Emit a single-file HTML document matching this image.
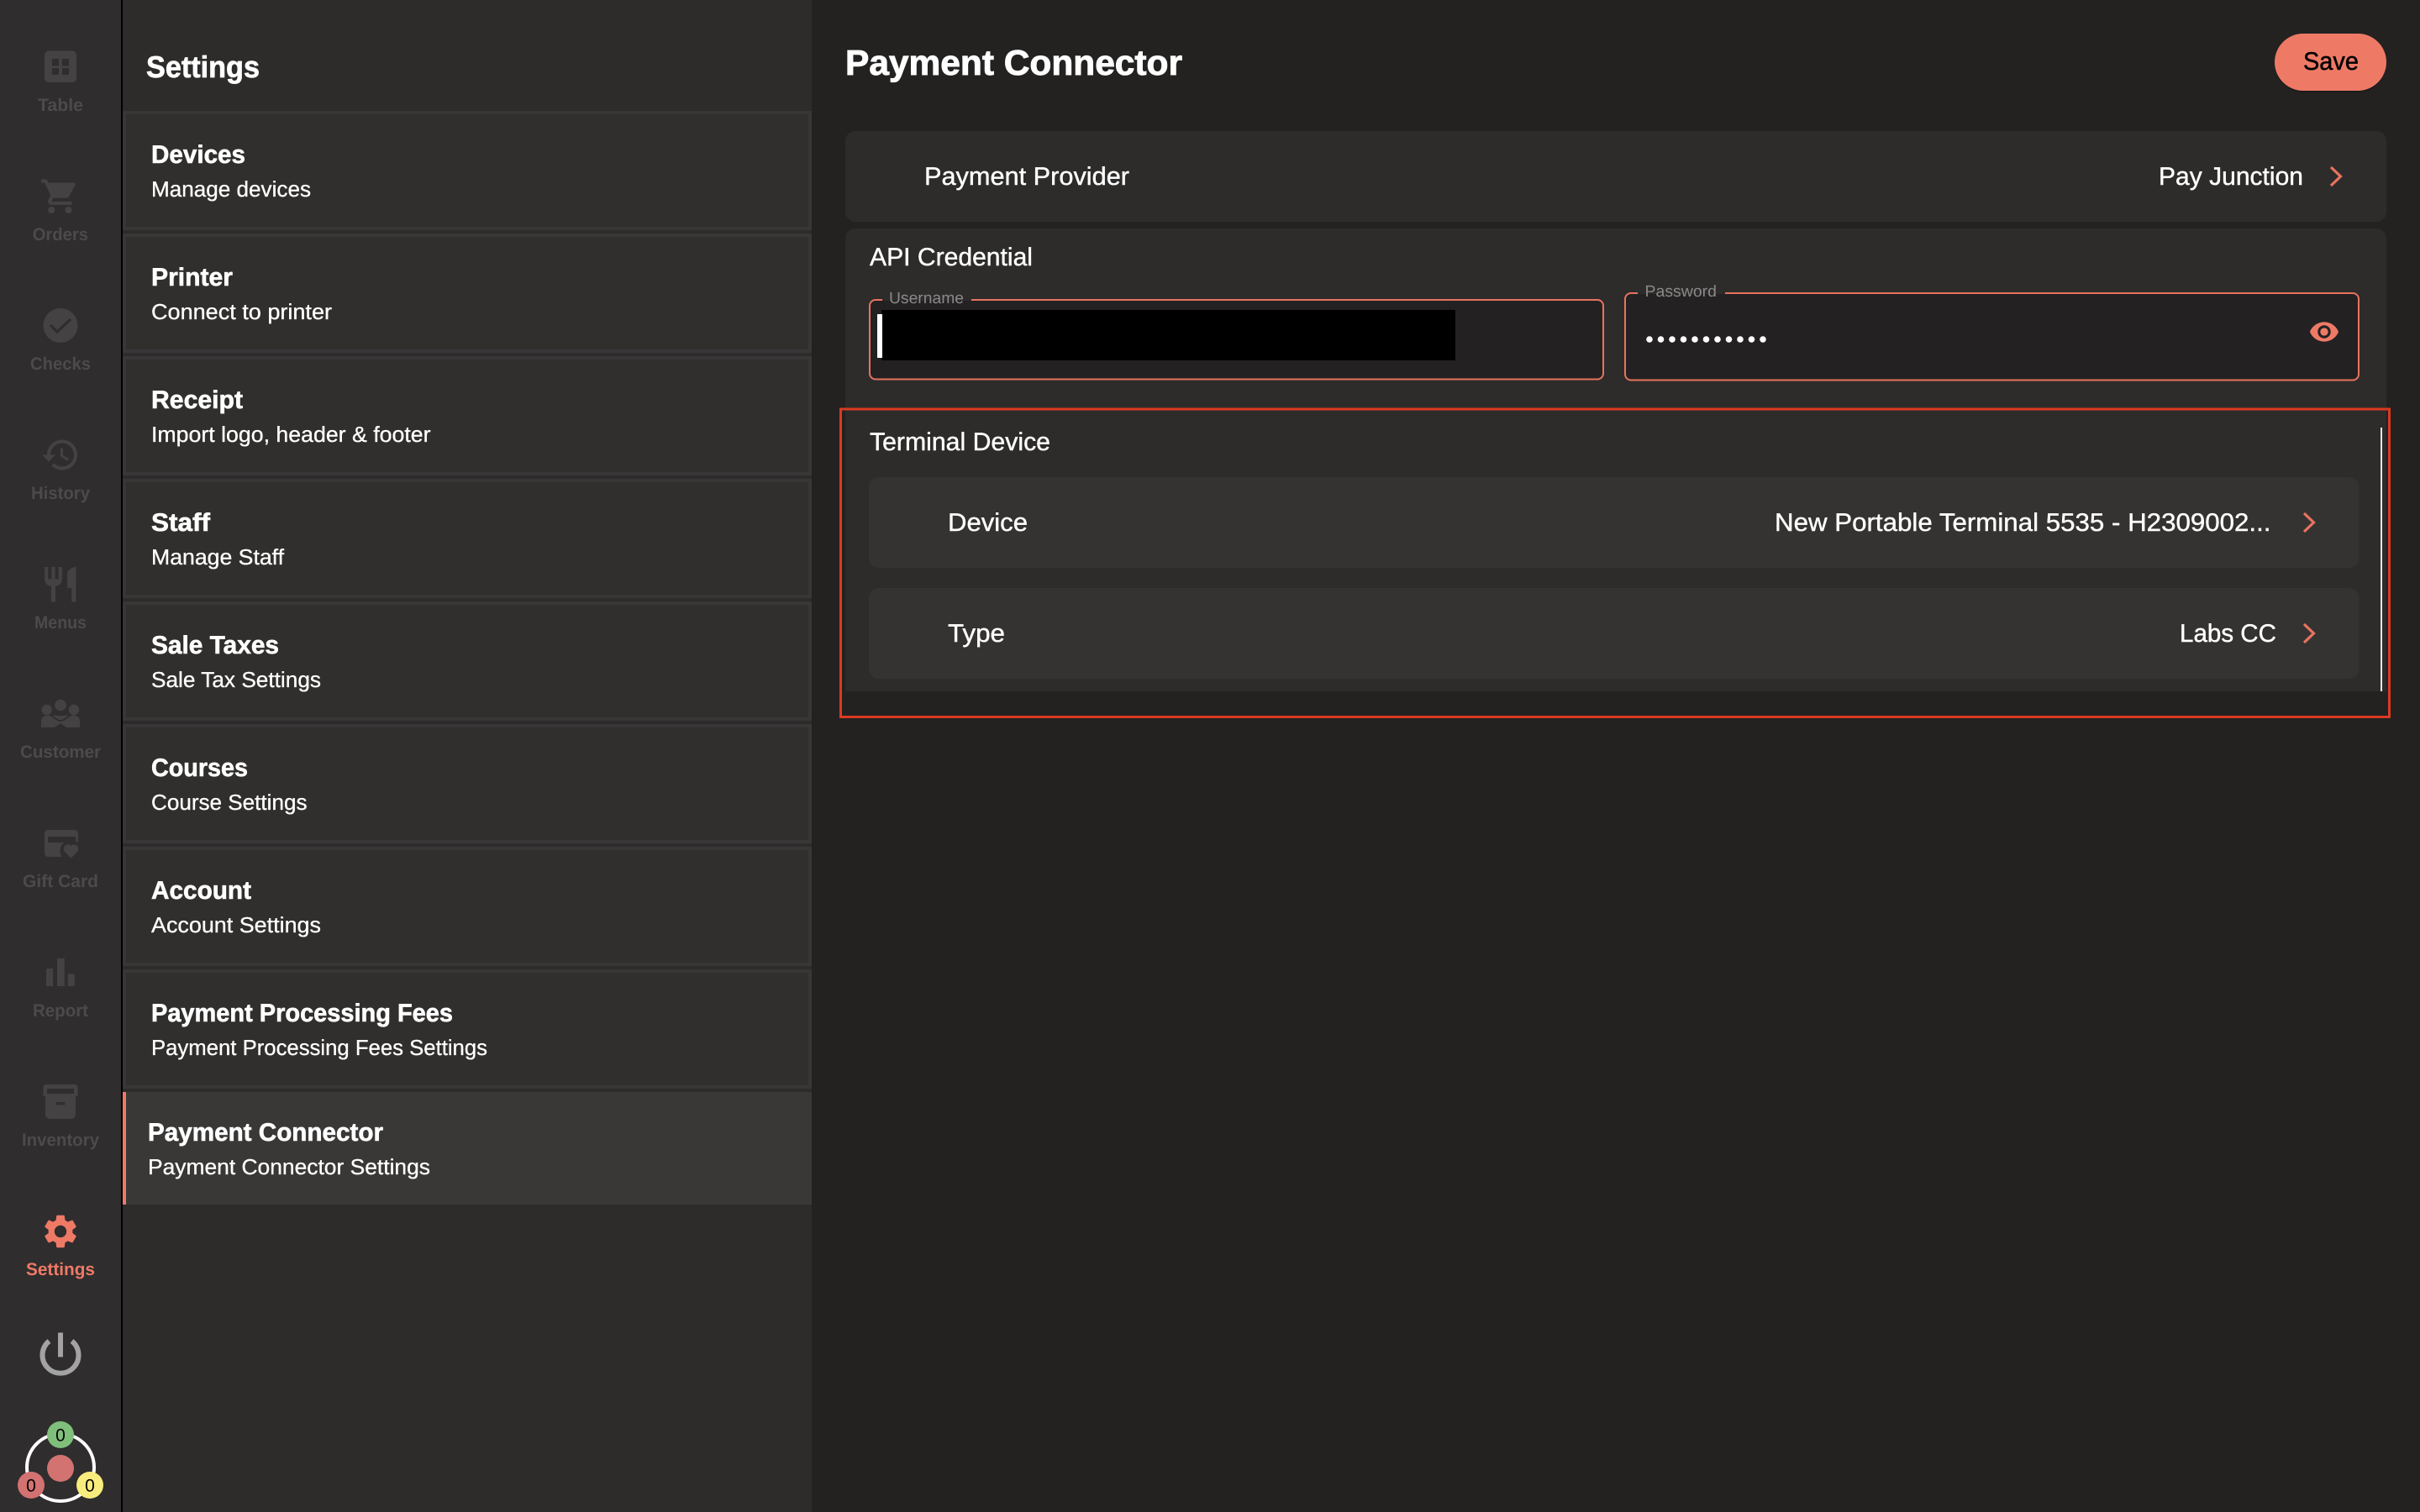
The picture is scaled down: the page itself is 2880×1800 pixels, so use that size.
<!DOCTYPE html>
<html lang="en">
<head>
<meta charset="utf-8">
<title>Payment Connector</title>
<style>
html,body{margin:0;padding:0;width:2880px;height:1800px;overflow:hidden;background:#232221}
svg{display:block;position:absolute;left:0;top:0}
text{font-family:"Liberation Sans",sans-serif;text-rendering:geometricPrecision}
.nav{font-size:21px;font-weight:700;fill:#4c4a4b}
.h{font-size:30px;font-weight:700;fill:#fff;stroke:#fff;stroke-width:.6}
.s{font-size:26px;fill:#fff;stroke:#fff;stroke-width:.3}
.m{font-size:30px;fill:#fff;stroke:#fff;stroke-width:.4}
.ic{fill:#444243}
.b{font-size:21px;fill:#000;text-anchor:middle}
.chev{fill:none;stroke:#e8735f;stroke-width:3.2}
</style>
</head>
<body>
<svg width="2880" height="1800" viewBox="0 0 2880 1800" xmlns="http://www.w3.org/2000/svg">
<!-- backgrounds -->
<rect x="0" y="0" width="2880" height="1800" fill="#232221"/>
<rect x="0" y="0" width="144" height="1800" fill="#2f2d2e"/>
<rect x="144" y="0" width="2" height="1800" fill="#000"/>
<rect x="146" y="0" width="820" height="1800" fill="#2d2c2b"/>

<!-- sidebar: table -->
<path class="ic" fill-rule="evenodd" d="M58 60.5h28a5 5 0 0 1 5 5V93a5 5 0 0 1-5 5H58a5 5 0 0 1-5-5V65.5a5 5 0 0 1 5-5zM62 70v8.5h8V70zM74 70v8.5h8V70zM62 81v8h8v-8zM74 81v8h8v-8z"/>
<text class="nav" x="45" y="132" textLength="54" lengthAdjust="spacingAndGlyphs">Table</text>
<!-- orders -->
<path class="ic" transform="translate(47 209.4) scale(2.03)" d="M7 18c-1.1 0-1.99.9-1.99 2S5.9 22 7 22s2-.9 2-2-.9-2-2-2zM1 2v2h2l3.6 7.59-1.35 2.45c-.16.28-.25.61-.25.96 0 1.1.9 2 2 2h12v-2H7.42c-.14 0-.25-.11-.25-.25l.03-.12.9-1.63h7.45c.75 0 1.41-.41 1.75-1.03l3.58-6.49c.08-.14.12-.31.12-.48 0-.55-.45-1-1-1H5.21l-.94-2H1zm16 16c-1.1 0-1.99.9-1.99 2s.89 2 1.99 2 2-.9 2-2-.9-2-2-2z"/>
<text class="nav" x="38.700" y="286" textLength="66.300" lengthAdjust="spacingAndGlyphs">Orders</text>
<!-- checks -->
<circle class="ic" cx="72" cy="387.500" r="20.500"/>
<path d="M60 387l8 8 16-15" fill="none" stroke="#2f2d2e" stroke-width="3.200"/>
<text class="nav" x="36" y="440" textLength="72" lengthAdjust="spacingAndGlyphs">Checks</text>
<!-- history -->
<path class="ic" transform="translate(48 517.5) scale(2)" d="M13 3c-4.97 0-9 4.03-9 9H1l3.89 3.89.07.14L9 12H6c0-3.87 3.13-7 7-7s7 3.13 7 7-3.13 7-7 7c-1.93 0-3.68-.79-4.94-2.06l-1.42 1.42C8.27 19.99 10.51 21 13 21c4.97 0 9-4.03 9-9s-4.03-9-9-9zm-1 5v5l4.28 2.54.72-1.21-3.5-2.08V8H12z"/>
<text class="nav" x="37" y="594" textLength="70" lengthAdjust="spacingAndGlyphs">History</text>
<!-- menus -->
<path class="ic" transform="translate(46.800 670.8) scale(2.08)" d="M11 9H9V2H7v7H5V2H3v7c0 2.12 1.66 3.84 3.75 3.97V22h2.500v-9.030C11.340 12.840 13 11.120 13 9V2h-2v7zm5-3v8h2.500v8H21V2c-2.760 0-5 2.240-5 4z"/>
<text class="nav" x="41" y="748" textLength="62" lengthAdjust="spacingAndGlyphs">Menus</text>
<!-- customer -->
<circle class="ic" cx="72" cy="839.500" r="6.800"/>
<circle class="ic" cx="55.700" cy="845" r="6.200"/>
<circle class="ic" cx="88" cy="845" r="6.200"/>
<path class="ic" d="M49 866v-8c0-4 4-6.500 9-6.500 5 0 8 .5 14 .5s9-.5 14-.5c5 0 9 2.500 9 6.500v8H79l-7-5-7 5z"/>
<path d="M59 851.500c4 0 7.500 6.500 13 6.500s9-6.500 13-6.500" fill="none" stroke="#2f2d2e" stroke-width="1.800"/>
<text class="nav" x="24" y="902" textLength="96" lengthAdjust="spacingAndGlyphs">Customer</text>
<!-- gift card -->
<path class="ic" fill-rule="evenodd" d="M57 988h32a4 4 0 0 1 4 4v28H57a4 4 0 0 1-4-4v-24a4 4 0 0 1 4-4zM57 996v7h33v-7z"/>
<circle cx="84.500" cy="1013" r="13" fill="#2f2d2e"/>
<rect x="88" y="1003" width="8" height="20" fill="#2f2d2e"/>
<path class="ic" d="M84.500 1021.500l-7.300-7.300a5.100 5.100 0 0 1 7.300-7.300 5.100 5.100 0 0 1 7.300 7.300z"/>
<text class="nav" x="27" y="1056" textLength="90" lengthAdjust="spacingAndGlyphs">Gift Card</text>
<!-- report -->
<rect class="ic" x="55" y="1153" width="8" height="21"/>
<rect class="ic" x="68" y="1141" width="8.700" height="33"/>
<rect class="ic" x="80.700" y="1159.500" width="8" height="14.500"/>
<text class="nav" x="39" y="1210" textLength="66" lengthAdjust="spacingAndGlyphs">Report</text>
<!-- inventory -->
<path class="ic" fill-rule="evenodd" d="M55 1291h34a3.500 3.500 0 0 1 3.500 3.500v10.500H90v22a5 5 0 0 1-5 5H59a5 5 0 0 1-5-5v-22h-2.500v-10.500A3.500 3.500 0 0 1 55 1291zM56 1296v6h32v-6zM66.700 1312v3.200h10.600V1312z"/>
<text class="nav" x="26" y="1364" textLength="92" lengthAdjust="spacingAndGlyphs">Inventory</text>
<!-- settings -->
<path fill="#ee7a66" transform="translate(48 1442) scale(2)" d="M19.14 12.94c.04-.3.06-.61.06-.94 0-.32-.02-.64-.07-.94l2.03-1.58c.18-.14.23-.41.12-.61l-1.92-3.32c-.12-.22-.37-.29-.59-.22l-2.39.96c-.5-.38-1.03-.7-1.62-.94l-.36-2.54c-.04-.24-.24-.41-.48-.41h-3.84c-.24 0-.43.17-.47.41l-.36 2.54c-.59.24-1.13.57-1.62.94l-2.39-.96c-.22-.08-.47 0-.59.22L2.74 8.87c-.12.21-.08.47.12.61l2.03 1.58c-.05.3-.09.63-.09.94s.02.64.07.94l-2.03 1.58c-.18.14-.23.41-.12.61l1.92 3.32c.12.22.37.29.59.22l2.39-.96c.5.38 1.03.7 1.62.94l.36 2.54c.05.24.24.41.48.41h3.84c.24 0 .44-.17.47-.41l.36-2.54c.59-.24 1.13-.56 1.62-.94l2.39.96c.22.08.47 0 .59-.22l1.92-3.32c.12-.22.07-.47-.12-.61l-2.01-1.58zM12 15.6c-1.98 0-3.6-1.62-3.6-3.6s1.62-3.6 3.6-3.6 3.6 1.62 3.6 3.6-1.62 3.6-3.6 3.6z"/>
<text class="nav" style="fill:#ee7a66" x="31" y="1518" textLength="82" lengthAdjust="spacingAndGlyphs">Settings</text>
<!-- power -->
<path d="M58.500 1596.500A21.500 21.500 0 1 0 85.500 1596.500" fill="none" stroke="#a3a3a3" stroke-width="6"/>
<rect x="69" y="1586.500" width="6" height="29" fill="#a3a3a3"/>
<!-- status -->
<circle cx="72" cy="1747" r="40" fill="none" stroke="#fff" stroke-width="4"/>
<circle cx="72" cy="1748" r="16" fill="#d27271"/>
<circle cx="72" cy="1708" r="16" fill="#7fbf7b"/>
<circle cx="37" cy="1768" r="16" fill="#d27271"/>
<circle cx="107" cy="1768" r="16" fill="#f8ec7c"/>
<text class="b" x="72" y="1715.500">0</text>
<text class="b" x="37" y="1775.500">0</text>
<text class="b" x="107" y="1775.500">0</text>

<!-- settings panel -->
<text x="174" y="92" font-size="36" font-weight="700" fill="#fff" stroke="#fff" stroke-width=".7" textLength="135" lengthAdjust="spacingAndGlyphs">Settings</text>

<g fill="#302f2d" stroke="#383637" stroke-width="4">
<rect x="148" y="134" width="816" height="138"/>
<rect x="148" y="280" width="816" height="138"/>
<rect x="148" y="426" width="816" height="138"/>
<rect x="148" y="572" width="816" height="138"/>
<rect x="148" y="718" width="816" height="138"/>
<rect x="148" y="864" width="816" height="138"/>
<rect x="148" y="1010" width="816" height="138"/>
<rect x="148" y="1156" width="816" height="138"/>
</g>
<rect x="146" y="1300" width="820" height="134" fill="#393837"/>
<rect x="146" y="1300" width="4" height="134" fill="#ee7a66"/>

<text class="h" x="180" y="194" textLength="112" lengthAdjust="spacingAndGlyphs">Devices</text>
<text class="s" x="180" y="234" textLength="190" lengthAdjust="spacingAndGlyphs">Manage devices</text>
<text class="h" x="180" y="340" textLength="97" lengthAdjust="spacingAndGlyphs">Printer</text>
<text class="s" x="180" y="380" textLength="215" lengthAdjust="spacingAndGlyphs">Connect to printer</text>
<text class="h" x="180" y="486" textLength="109" lengthAdjust="spacingAndGlyphs">Receipt</text>
<text class="s" x="180" y="526" textLength="332.500" lengthAdjust="spacingAndGlyphs">Import logo, header &amp; footer</text>
<text class="h" x="180" y="632" textLength="70" lengthAdjust="spacingAndGlyphs">Staff</text>
<text class="s" x="180" y="672" textLength="158" lengthAdjust="spacingAndGlyphs">Manage Staff</text>
<text class="h" x="180" y="778" textLength="152" lengthAdjust="spacingAndGlyphs">Sale Taxes</text>
<text class="s" x="180" y="818" textLength="202" lengthAdjust="spacingAndGlyphs">Sale Tax Settings</text>
<text class="h" x="180" y="924" textLength="115" lengthAdjust="spacingAndGlyphs">Courses</text>
<text class="s" x="180" y="964" textLength="185.500" lengthAdjust="spacingAndGlyphs">Course Settings</text>
<text class="h" x="180" y="1070" textLength="119" lengthAdjust="spacingAndGlyphs">Account</text>
<text class="s" x="180" y="1110" textLength="202" lengthAdjust="spacingAndGlyphs">Account Settings</text>
<text class="h" x="180" y="1216" textLength="359" lengthAdjust="spacingAndGlyphs">Payment Processing Fees</text>
<text class="s" x="180" y="1256" textLength="400" lengthAdjust="spacingAndGlyphs">Payment Processing Fees Settings</text>
<text class="h" x="176" y="1358" textLength="280" lengthAdjust="spacingAndGlyphs">Payment Connector</text>
<text class="s" x="176" y="1398" textLength="336" lengthAdjust="spacingAndGlyphs">Payment Connector Settings</text>

<!-- main header -->
<text x="1006" y="89" font-size="42" font-weight="700" fill="#fff" stroke="#fff" stroke-width=".9" textLength="401" lengthAdjust="spacingAndGlyphs">Payment Connector</text>
<rect x="2707" y="42" width="133" height="68" rx="34" fill="#000" opacity=".18"/>
<rect x="2707" y="40" width="133" height="68" rx="34" fill="#ee7a66"/>
<text x="2741" y="83" font-size="30" fill="#000" stroke="#000" stroke-width=".5" textLength="66" lengthAdjust="spacingAndGlyphs">Save</text>

<!-- provider card -->
<rect x="1006" y="156" width="1834" height="108" rx="12" fill="#2d2c2b"/>
<text class="m" x="1100" y="220" textLength="244" lengthAdjust="spacingAndGlyphs">Payment Provider</text>
<text class="m" x="2569" y="220" textLength="172" lengthAdjust="spacingAndGlyphs">Pay Junction</text>
<path class="chev" d="M2774 199l11.500 11-11.500 11"/>

<!-- credential card -->
<rect x="1006" y="272" width="1834" height="551" rx="12" fill="#2d2c2b"/>
<rect x="1006" y="480" width="1834" height="343" fill="#2d2c2b"/>
<text class="m" x="1035" y="316" textLength="194" lengthAdjust="spacingAndGlyphs">API Credential</text>

<!-- username field -->
<rect x="1035" y="357" width="873" height="94.500" rx="7" fill="#232122" stroke="#e8735f" stroke-width="2"/>
<rect x="1050" y="355" width="106" height="3" fill="#2d2c2b"/>
<rect x="1050" y="358" width="106" height="2" fill="#232122"/>
<text x="1058" y="361" font-size="19" fill="#8a8888" textLength="89" lengthAdjust="spacingAndGlyphs">Username</text>
<rect x="1049" y="369" width="683" height="60" fill="#000"/>
<rect x="1044" y="374" width="6" height="52" fill="#fff"/>

<!-- password field -->
<rect x="1934" y="349" width="873" height="103.500" rx="7" fill="#232122" stroke="#e8735f" stroke-width="2"/>
<rect x="1949" y="347" width="104" height="3" fill="#2d2c2b"/>
<rect x="1949" y="350" width="104" height="2" fill="#232122"/>
<text x="1957.500" y="353" font-size="19" fill="#8a8888" textLength="85.500" lengthAdjust="spacingAndGlyphs">Password</text>
<g fill="#fff">
<circle cx="1963" cy="404" r="3.800"/><circle cx="1976.500" cy="404" r="3.800"/><circle cx="1990" cy="404" r="3.800"/><circle cx="2003.500" cy="404" r="3.800"/><circle cx="2017" cy="404" r="3.800"/><circle cx="2030.500" cy="404" r="3.800"/><circle cx="2044" cy="404" r="3.800"/><circle cx="2057.500" cy="404" r="3.800"/><circle cx="2071" cy="404" r="3.800"/><circle cx="2084.500" cy="404" r="3.800"/><circle cx="2098" cy="404" r="3.800"/>
</g>
<path fill="#ee7a66" transform="translate(2747.400 376.400) scale(1.55)" d="M12 4.500C7 4.500 2.730 7.610 1 12c1.730 4.390 6 7.500 11 7.500s9.270-3.110 11-7.500c-1.730-4.390-6-7.500-11-7.500zM12 17c-2.760 0-5-2.240-5-5s2.240-5 5-5 5 2.240 5 5-2.240 5-5 5zm0-8c-1.660 0-3 1.340-3 3s1.340 3 3 3 3-1.340 3-3-1.340-3-3-3z"/>

<!-- terminal device -->
<text class="m" x="1035" y="536" textLength="215" lengthAdjust="spacingAndGlyphs">Terminal Device</text>
<rect x="1034" y="568" width="1773.500" height="108" rx="12" fill="#343332"/>
<text class="m" x="1128" y="632" textLength="95" lengthAdjust="spacingAndGlyphs">Device</text>
<text class="m" x="2112" y="632" textLength="590.500" lengthAdjust="spacingAndGlyphs">New Portable Terminal 5535 - H2309002...</text>
<path class="chev" d="M2742 611l11.500 11-11.500 11"/>
<rect x="1034" y="700" width="1773.500" height="108" rx="12" fill="#343332"/>
<text class="m" x="1128" y="764" textLength="68" lengthAdjust="spacingAndGlyphs">Type</text>
<text class="m" x="2594" y="764" textLength="115" lengthAdjust="spacingAndGlyphs">Labs CC</text>
<path class="chev" d="M2742 743l11.500 11-11.500 11"/>

<!-- scrollbar -->
<rect x="2833" y="509" width="2" height="314" fill="#e8e8e8"/>
<!-- red annotation -->
<rect x="1000.500" y="487" width="1843" height="366.500" fill="none" stroke="#da3a20" stroke-width="3"/>
</svg>
</body>
</html>
